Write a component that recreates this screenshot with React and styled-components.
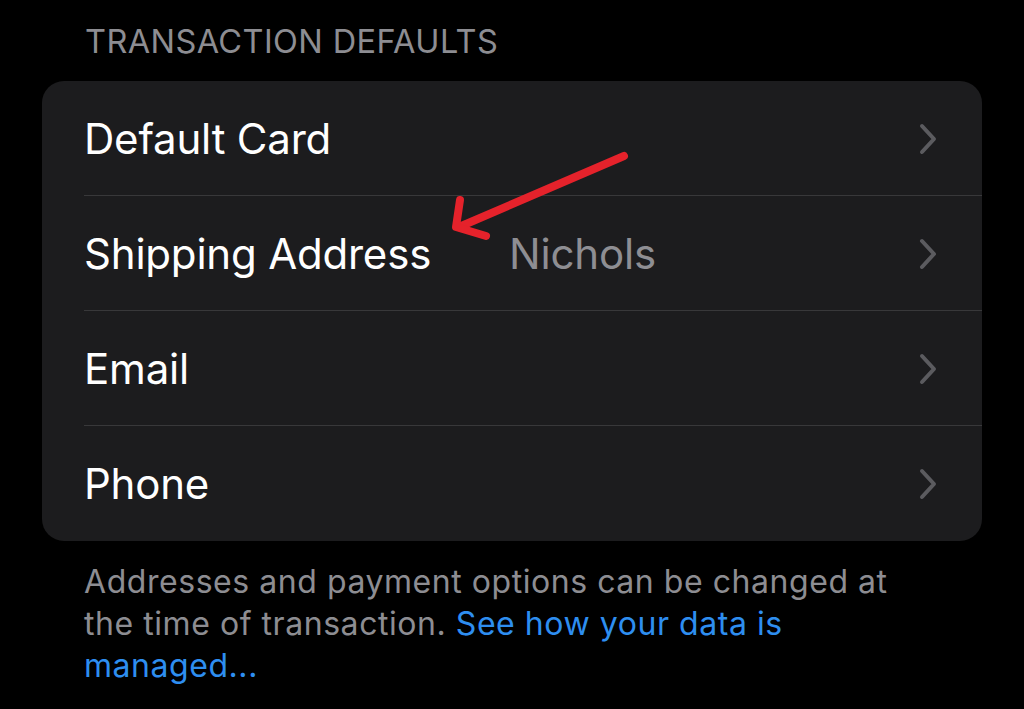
import styled, { createGlobalStyle } from 'styled-components';

// Global
const GlobalStyle = createGlobalStyle`
	html, body {
		margin: 0;
		padding: 0;
		background: #000;
	}
	body {
		font-family: Inter, "Noto Sans", "Liberation Sans", sans-serif;
		-webkit-font-smoothing: antialiased;
	}
`;

// Style
const Page = styled.div`
	position: relative;
	width: 1024px;
	height: 709px;
	overflow: hidden;
	background: #000;
	padding: 22px 42px 0 42px;
	box-sizing: border-box;
`;

const SectionHeader = styled.div`
	padding-left: 43px;
	font-size: 32.5px;
	line-height: 40px;
	letter-spacing: 0.4px;
	color: #8d8d92;
	margin-bottom: 19px;
`;

const Card = styled.div`
	background: #1c1c1e;
	border-radius: 22px;
	overflow: hidden;
`;

const Row = styled.div`
	position: relative;
	height: 115px;
	display: flex;
	align-items: center;
	padding: 0 44px 0 42px;
	box-sizing: border-box;

	&:not(:last-child)::after {
		content: '';
		position: absolute;
		left: 42px;
		right: 0;
		bottom: 0;
		height: 1px;
		background: #38383a;
	}
`;

const Label = styled.span`
	font-size: 42px;
	color: #fff;
	letter-spacing: -0.2px;
`;

const Value = styled.span`
	margin-left: 78px;
	font-size: 42px;
	color: #8e8e93;
	letter-spacing: -0.2px;
`;

const Chevron = styled.svg`
	margin-left: auto;
	width: 20px;
	height: 32px;
`;

const Footer = styled.p`
	margin: 20px 0 0 0;
	padding: 0 60px 0 42px;
	font-size: 32px;
	line-height: 42px;
	color: #8d8d92;
	letter-spacing: 0.55px;
`;

const Link = styled.span`
	color: #2e8ef0;
`;

const Arrow = styled.svg`
	position: absolute;
	left: 440px;
	top: 140px;
	width: 200px;
	height: 110px;
	pointer-events: none;
`;

const rows = [
	{ label: 'Default Card' },
	{ label: 'Shipping Address', value: 'Nichols' },
	{ label: 'Email' },
	{ label: 'Phone' },
];

// Render
export default function App() {
	return (
		<>
			<GlobalStyle />
			<Page>
				<SectionHeader>TRANSACTION DEFAULTS</SectionHeader>
				<Card>
					{rows.map((row) => (
						<Row key={row.label}>
							<Label>{row.label}</Label>
							{row.value && <Value>{row.value}</Value>}
							<Chevron viewBox="0 0 20 32">
								<path
									d="M4 3 L16 16 L4 29"
									fill="none"
									stroke="#5b5b5f"
									strokeWidth="4"
									strokeLinecap="round"
									strokeLinejoin="round"
								/>
							</Chevron>
						</Row>
					))}
				</Card>
				<Footer>
					Addresses and payment options can be changed at the time of transaction.{' '}
					<Link>See how your data is managed...</Link>
				</Footer>
				<Arrow viewBox="0 0 200 110">
					<g
						fill="none"
						stroke="#e5222b"
						strokeWidth="8"
						strokeLinecap="round"
						strokeLinejoin="round"
					>
						<path d="M184 16 L19 87" />
						<path d="M20 60 L16 87 L46 96" />
					</g>
				</Arrow>
			</Page>
		</>
	);
}
